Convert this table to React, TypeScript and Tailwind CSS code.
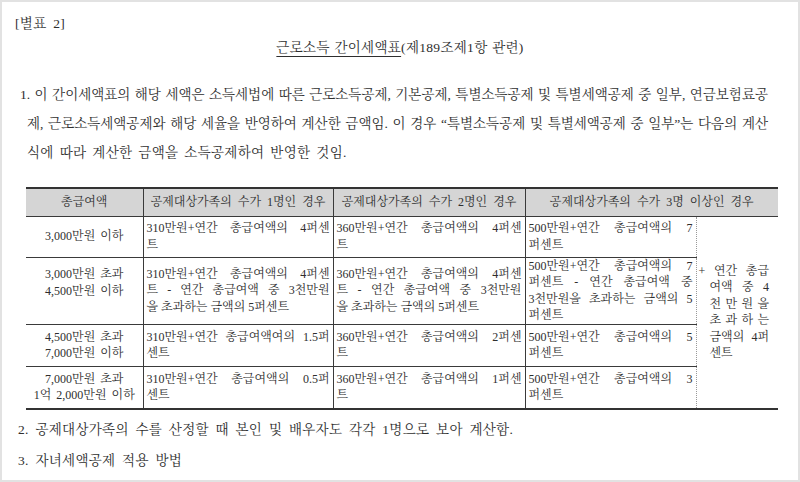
import React from "react";

const serif = "font-['Liberation_Serif','Noto_Serif_CJK_KR','Noto_Sans_CJK_KR',serif]";

// a line that is spread from edge to edge, like justified text
function J({ t, className = "" }: { t: string; className?: string }) {
  return (
    <div className={`flex justify-between ${className}`}>
      {t.split(" ").map((w, i) => (
        <span key={i}>{w}</span>
      ))}
    </div>
  );
}

function Lines({ lines }: { lines: string[] }) {
  return (
    <>
      {lines.map((l, i) =>
        i < lines.length - 1 ? <J key={i} t={l} /> : <div key={i}>{l}</div>
      )}
    </>
  );
}

const th = "border border-[#3a3a3a] bg-[#d5d5d5] text-center font-normal [word-spacing:3px] p-0";
const td = "border border-[#3a3a3a] align-middle px-[3px] py-0 leading-[16.5px]";
const first = "border border-[#3a3a3a] align-middle text-center p-0 leading-[16.5px] [word-spacing:2px]";

const rows = [
  {
    range: ["3,000만원 이하"],
    c1: ["310만원+연간 총급여액의 4퍼센", "트"],
    c2: ["360만원+연간 총급여액의 4퍼센", "트"],
    c3: ["500만원+연간 총급여액의 7", "퍼센트"],
    h: "h-[41px]",
  },
  {
    range: ["3,000만원 초과", "4,500만원 이하"],
    c1: ["310만원+연간 총급여액의 4퍼센", "트 - 연간 총급여액 중 3천만원", "을 초과하는 금액의 5퍼센트"],
    c2: ["360만원+연간 총급여액의 4퍼센", "트 - 연간 총급여액 중 3천만원", "을 초과하는 금액의 5퍼센트"],
    c3: ["500만원+연간 총급여액의 7", "퍼센트 - 연간 총급여액 중", "3천만원을 초과하는 금액의 5", "퍼센트"],
    h: "h-[62px]",
  },
  {
    range: ["4,500만원 초과", "7,000만원 이하"],
    c1: ["310만원+연간 총급여액여의 1.5퍼", "센트"],
    c2: ["360만원+연간 총급여액의 2퍼센", "트"],
    c3: ["500만원+연간 총급여액의 5", "퍼센트"],
    h: "h-[42px]",
  },
  {
    range: ["7,000만원 초과", "1억 2,000만원 이하"],
    c1: ["310만원+연간 총급여액의 0.5퍼", "센트"],
    c2: ["360만원+연간 총급여액의 1퍼센", "트"],
    c3: ["500만원+연간 총급여액의 3", "퍼센트"],
    h: "h-[43px]",
  },
];

export default function App() {
  return (
    <div className={`box-border h-[482px] w-[800px] overflow-hidden border-2 border-[#e2e2e2] bg-white text-[#2e2e2e] ${serif}`}>
      <div className="mt-[12px] pl-[13px] text-[13.5px] leading-[20px] tracking-[0.3px] [word-spacing:3px]">[별표 2]</div>

      <div className="mt-[4px] text-center text-[13.5px] leading-[20px] tracking-[0.3px] [word-spacing:1px]">
        <span className="underline decoration-1 underline-offset-[4px]">근로소득 간이세액표</span>(제189조제1항 관련)
      </div>

      <div className="mt-[22px] w-[766px] pl-[18px] text-[13.5px] leading-[29px]">
        <J t="1. 이 간이세액표의 해당 세액은 소득세법에 따른 근로소득공제, 기본공제, 특별소득공제 및 특별세액공제 중 일부, 연금보험료공" />
        <div className="pl-[7px]">
          <J t="제, 근로소득세액공제와 해당 세율을 반영하여 계산한 금액임. 이 경우 “특별소득공제 및 특별세액공제 중 일부”는 다음의 계산" />
          <div className="tracking-[0.3px] [word-spacing:2.3px]">식에 따라 계산한 금액을 소득공제하여 반영한 것임.</div>
        </div>
      </div>

      <table className="ml-[24px] mt-[20px] w-[752px] table-fixed border-collapse border-y-2 border-y-[#333] text-[12px]">
        <colgroup>
          <col className="w-[117px]" />
          <col className="w-[190px]" />
          <col className="w-[192px]" />
          <col className="w-[171px]" />
          <col className="w-[82px]" />
        </colgroup>
        <thead>
          <tr className="h-[28px]">
            <th className={`${th} border-l-0`}>총급여액</th>
            <th className={th}>공제대상가족의 수가 1명인 경우</th>
            <th className={th}>공제대상가족의 수가 2명인 경우</th>
            <th colSpan={2} className={`${th} border-r-0`}>
              공제대상가족의 수가 3명 이상인 경우
            </th>
          </tr>
        </thead>
        <tbody>
          {rows.map((r, i) => (
            <tr key={i} className={r.h}>
              <td className={`${first} border-l-0 ${i === 1 ? "pb-[16px]" : ""}`}>
                {r.range.map((x) => (
                  <div key={x}>{x}</div>
                ))}
              </td>
              <td className={td}>
                <Lines lines={r.c1} />
              </td>
              <td className={td}>
                <Lines lines={r.c2} />
              </td>
              <td className={`${td} border-r border-r-[#999] [border-right-style:dotted]`}>
                <Lines lines={r.c3} />
              </td>
              {i === 0 ? (
                <td rowSpan={4} className="border-0 pl-[13px] pr-[9px] align-middle leading-[16.5px]">
                  <J t="+ 연간 총급" className="-ml-[11px]" />
                  <J t="여액 중 4" />
                  <J t="천 만 원 을" />
                  <J t="초 과 하 는" />
                  <J t="금액의 4퍼" />
                  <div>센트</div>
                </td>
              ) : null}
            </tr>
          ))}
        </tbody>
      </table>

      <div className="mt-[4px] pl-[16px] text-[13.5px] leading-[31px] tracking-[0.3px] [word-spacing:3px]">
        <div>2. 공제대상가족의 수를 산정할 때 본인 및 배우자도 각각 1명으로 보아 계산함.</div>
        <div>3. 자녀세액공제 적용 방법</div>
      </div>
    </div>
  );
}
